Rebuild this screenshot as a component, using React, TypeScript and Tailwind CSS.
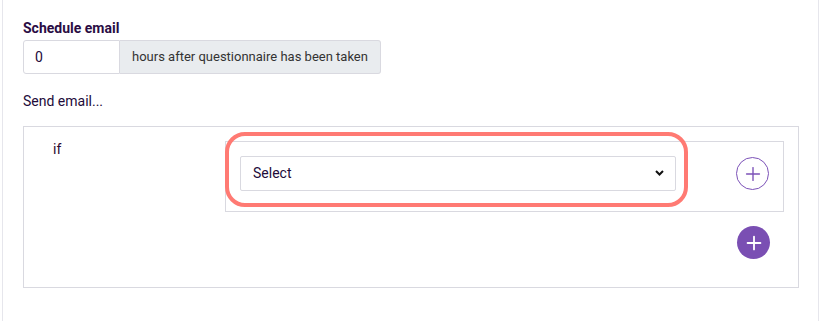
import { Plus } from 'lucide-react'

export default function App() {
  return (
    <div className="h-[321px] w-[822px] bg-white font-['Roboto',sans-serif] text-[#220b3a]">
      <div className="ml-[2px] h-full w-[817px] border-x border-[#e6e6ec] pl-[20px] pt-[19px]">
        <div className="text-[14px] font-bold leading-[18px] text-[#2a0c44]">Schedule email</div>

        <div className="mt-[3px] flex h-[34px] w-[358px] text-[13px]">
          <input
            defaultValue="0"
            className="w-[97px] rounded-l-[3px] border border-[#d9d9e0] bg-white px-[11px] text-[14px] text-[#220b3a] outline-none"
          />
          <div className="flex flex-1 items-center rounded-r-[3px] border border-l-0 border-[#d9d9e0] bg-[#e9ecef] px-[12px] text-[#333]">
            hours after questionnaire has been taken
          </div>
        </div>

        <div className="mt-[19px] text-[14px] leading-[16px]">Send email...</div>

        <div className="mt-[17px] flex h-[162px] w-[776px] border border-[#d9d9e0] pr-[14px] pt-[14px]">
          <div className="w-[201px] pl-[29px] text-[14px] leading-[16px] text-[#2e0a30]">if</div>

          <div className="flex flex-1 flex-col">
            <div className="relative flex h-[71px] items-start justify-between border border-[#d9d9e0] px-[14px] pt-[14px]">
              <div className="relative h-[35px] w-[436px]">
                <select className="h-full w-full appearance-none rounded-[2px] border border-[#d9d9e0] bg-white pl-[12px] text-[14px] text-[#220b3a] outline-none">
                  <option>Select</option>
                </select>
                <svg
                  className="pointer-events-none absolute right-[12px] top-[14px]"
                  width="9"
                  height="6"
                  viewBox="0 0 9 6"
                >
                  <path d="M1 1l3.5 3.5L8 1" fill="none" stroke="#111" strokeWidth="2" />
                </svg>
              </div>
              <button className="mt-[1px] flex h-[33px] w-[33px] items-center justify-center rounded-full border border-[#7c52b8] text-[#7c52b8]">
                <Plus size={22} strokeWidth={1.5} />
              </button>

              <div className="pointer-events-none absolute left-[-1px] top-[-10px] h-[75px] w-[463px] rounded-[20px] border-[4px] border-[#ff7a73]" />
            </div>

            <div className="mt-[14px] flex justify-end pr-[14px]">
              <button className="flex h-[33px] w-[33px] items-center justify-center rounded-full bg-[#7a4fb3] text-white">
                <Plus size={22} strokeWidth={2} />
              </button>
            </div>
          </div>
        </div>
      </div>
    </div>
  )
}
